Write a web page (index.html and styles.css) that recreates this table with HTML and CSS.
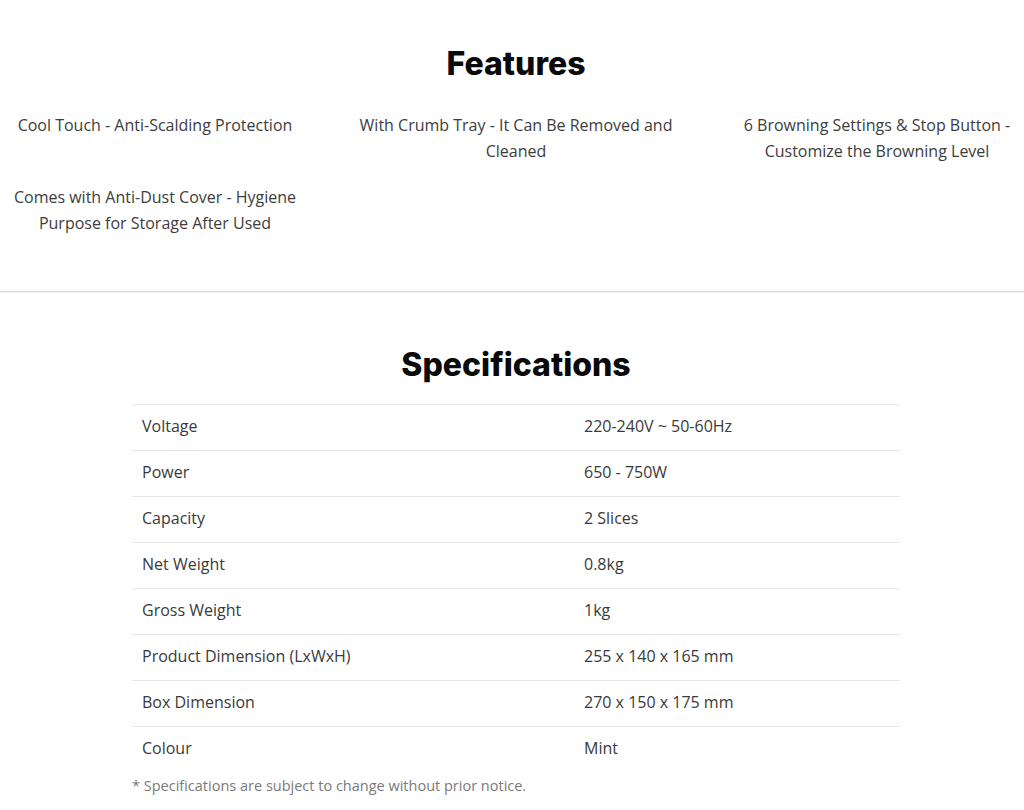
FILE: index.html
```html
<!DOCTYPE html>
<html lang="en">
<head>
<meta charset="utf-8">
<title>Toaster – Features &amp; Specifications</title>
<link rel="stylesheet" href="styles.css">
</head>
<body>
<div class="page">
  <section class="features">
    <h2 class="section-title">Features</h2>
    <ul class="feature-grid">
      <li class="feature">Cool Touch - Anti-Scalding Protection</li>
      <li class="feature">With Crumb Tray - It Can Be Removed and Cleaned</li>
      <li class="feature">6 Browning Settings &amp; Stop Button - Customize the Browning Level</li>
      <li class="feature">Comes with Anti-Dust Cover - Hygiene Purpose for Storage After Used</li>
    </ul>
  </section>
  <hr class="divider">
  <section class="specs">
    <h2 class="section-title">Specifications</h2>
    <table class="spec-table">
      <colgroup><col class="col-label"><col class="col-value"></colgroup>
      <tbody>
        <tr><td>Voltage</td><td>220-240V ~ 50-60Hz</td></tr>
        <tr><td>Power</td><td>650 - 750W</td></tr>
        <tr><td>Capacity</td><td>2 Slices</td></tr>
        <tr><td>Net Weight</td><td>0.8kg</td></tr>
        <tr><td>Gross Weight</td><td>1kg</td></tr>
        <tr><td>Product Dimension (LxWxH)</td><td>255 x 140 x 165 mm</td></tr>
        <tr><td>Box Dimension</td><td>270 x 150 x 175 mm</td></tr>
        <tr><td>Colour</td><td>Mint</td></tr>
      </tbody>
    </table>
    <p class="note">* Specifications are subject to change without prior notice.</p>
  </section>
</div>
</body>
</html>
```
FILE: styles.css
```css
html, body {
  margin: 0;
  padding: 0;
  background: #fff;
}
body {
  font-family: "Open Sans", "Noto Sans", sans-serif;
  color: #3d3d3d;
  overflow-x: hidden;
}
.page {
  padding-left: 8px;
  overflow-x: hidden;
}
.section-title {
  margin: 0;
  font-family: "Inter", "Liberation Sans", sans-serif;
  font-weight: 800;
  font-size: 32px;
  line-height: 40px;
  color: #0a0a0a;
  text-align: center;
}
.features {
  padding: 44px 0 55px;
}
.feature-grid {
  list-style: none;
  margin: 28px 0 0;
  padding: 0;
  display: grid;
  grid-template-columns: repeat(3, 334px);
  column-gap: 27px;
  row-gap: 20px;
  justify-content: center;
}
.feature {
  font-size: 16px;
  line-height: 26px;
  text-align: center;
  color: #3d3d3d;
}
.divider {
  margin: 0 0 0 -8px;
  border: 0;
  border-top: 1px solid #dcdcdc;
  height: 1px;
  background: #f3f3f3;
}
.specs {
  padding-top: 52px;
  display: flex;
  flex-direction: column;
  align-items: center;
}
.spec-table {
  margin-top: 19px;
  width: 768px;
  border-collapse: collapse;
  table-layout: fixed;
  font-size: 16px;
  line-height: 26px;
  color: #3a3a3a;
}
.col-label { width: 442px; }
.col-value { width: 326px; }
.spec-table td {
  border-top: 1px solid #e6e6e6;
  padding: 8px 10px 11px;
  text-align: left;
  vertical-align: top;
}
.note {
  width: 768px;
  margin: 4px 0 0;
  font-size: 14.5px;
  line-height: 20px;
  color: #7a7a7a;
}
```
